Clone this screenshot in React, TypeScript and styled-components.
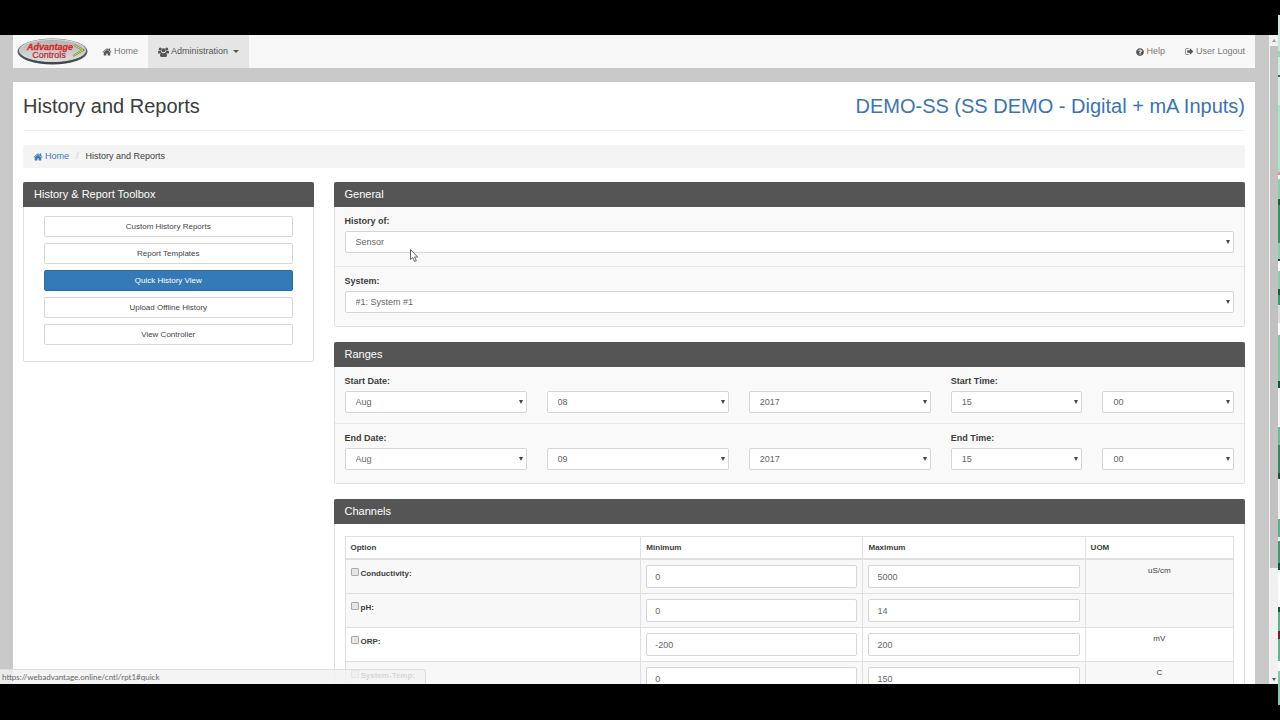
import React from "react";
import styled, { createGlobalStyle } from "styled-components";
import { FaQuestionCircle } from "react-icons/fa";

const Global = createGlobalStyle`
  *, *::before, *::after { box-sizing: border-box; }
  body { margin: 0; background: #000; }
  body, button, input, select { font-family: "Liberation Sans", Arial, sans-serif; }
`;

const Stage = styled.div`
  display: flex;
  height: 100vh;
  overflow: hidden;
  background: #000;
  color: #3c3c3c;
  font-size: 9px;
  line-height: 13px;
`;

const Screen = styled.div`
  flex: 1;
  min-width: 0;
  display: flex;
  margin: 35px 0 36px;
  position: relative;
  overflow: hidden;
`;

const EdgeStrip = styled.div`
  width: 2px;
  margin: 15px 0;
  background: linear-gradient(
    #c4e8da 0 36px, #8fdcb0 36px 42px, #c9efdd 42px 60px, #555 60px 62px, #d3efe3 62px 90px,
    #a6e8c6 90px 157px, #e888ac 157px 160px, #fff 160px 164px, #86d0a9 164px 184px,
    #1c5c44 184px 190px, #2f9468 190px 228px, #86d0a9 228px 244px, #333 244px 246px,
    #fff 246px 256px, #86d0a9 256px 274px, #115c3c 274px 280px, #35a070 280px 290px,
    #ddd 290px 308px, #fff 308px 320px, #7fc8a2 320px 366px, #12553a 366px 373px,
    #f4f4f4 373px 412px, #69bd94 412px 430px, #2f8c62 430px 458px, #12553a 458px 464px,
    #f0f0f0 464px 504px, #58b488 504px 522px, #fff 522px 526px, #3a9c70 526px 548px,
    #12553a 548px 555px, #fff 555px 592px, #12553a 592px 597px, #58b488 597px 616px,
    #7c1838 616px 624px, #5cb88c 624px 646px, #fff 646px 656px, #7ccba4 656px
  );
`;

const Page = styled.div`
  flex: 1;
  min-width: 0;
  padding: 0 14px 0 13px;
  background: #c9c9c9;
`;

const Nav = styled.nav`
  display: flex;
  align-items: stretch;
  height: 33px;
  padding-right: 10px;
  background: #f8f8f8;
`;

const Brand = styled.a`
  display: flex;
  align-items: center;
  padding: 0 4px;
`;

const NavLink = styled.a<{ $active?: boolean; $push?: boolean }>`
  display: flex;
  align-items: center;
  gap: 2px;
  padding: 0 10px;
  margin-left: ${(p) => (p.$push ? "auto" : "0")};
  color: ${(p) => (p.$active ? "#555" : "#777")};
  background: ${(p) => (p.$active ? "#e5e5e5" : "transparent")};
  text-decoration: none;
  &:last-child { padding-right: 0; }
  svg { color: #555; }
`;

const Caret = styled.span`
  margin-left: 3px;
  border: 3px solid transparent;
  border-top-color: #555;
  border-bottom-width: 0;
`;

const Content = styled.main`
  margin-top: 14px;
  padding: 12px 10px 20px;
  background: #fff;
`;

const TitleRow = styled.header`
  display: flex;
  justify-content: space-between;
  padding-bottom: 12px;
  border-bottom: 1px solid #f0f0f0;
  font-size: 20px;
  line-height: 24px;
`;

const Title = styled.h1`
  margin: 0;
  font-size: 20px;
  font-weight: 400;
`;

const Unit = styled.a`
  color: #3b74af;
  text-decoration: none;
`;

const Crumbs = styled.nav`
  display: flex;
  align-items: center;
  gap: 7px;
  height: 23px;
  margin: 14px 0;
  padding: 0 10px;
  border-radius: 2px;
  background: #f4f4f4;
`;

const CrumbLink = styled.a`
  display: flex;
  align-items: center;
  gap: 2px;
  color: #3c78b8;
  text-decoration: none;
`;

const Slash = styled.span`
  color: #ccc;
`;

const Columns = styled.div`
  display: flex;
  align-items: flex-start;
  margin: 0 -10px;
`;

const Column = styled.div<{ $share: number }>`
  width: ${(p) => p.$share}%;
  padding: 0 10px;
`;

const Panel = styled.section`
  margin-bottom: 15px;
  border: 1px solid #e0e0e0;
  border-radius: 2px;
`;

const PanelTitle = styled.h2`
  margin: -1px -1px 0;
  padding: 6px 11px;
  border-radius: 2px 2px 0 0;
  background: #555;
  color: #fff;
  font-size: 11px;
  font-weight: 400;
  line-height: 13px;
`;

const ToolList = styled.div`
  display: flex;
  flex-direction: column;
  gap: 6px;
  padding: 9px 20px 16px;
`;

const ToolButton = styled.button<{ $primary?: boolean }>`
  height: 21px;
  padding: 0;
  border: 1px solid ${(p) => (p.$primary ? "#2e6da4" : "#d8d8d8")};
  border-radius: 2px;
  background: ${(p) => (p.$primary ? "#337ab7" : "#fff")};
  color: ${(p) => (p.$primary ? "#fff" : "#444")};
  font-size: 8px;
`;

const FormRow = styled.div<{ $tight?: boolean }>`
  display: grid;
  grid-template-columns: 1fr;
  padding: 8px 10px ${(p) => (p.$tight ? 10 : 13)}px;
  background: #f9f9f9;
  & + & { border-top: 1px solid #e6e6e6; }
`;

const RangeRow = styled(FormRow)`
  grid-template-columns: 4fr 4fr 4fr 3fr 3fr;
  padding-left: 0;
  padding-right: 0;
`;

const Field = styled.div`
  display: flex;
  flex-direction: column;
  justify-content: flex-end;
  min-width: 0;
`;

const RangeField = styled(Field)`
  padding: 0 10px;
`;

const FieldLabel = styled.label`
  margin-bottom: 3px;
  font-weight: 700;
`;

const SelectBox = styled.span`
  display: grid;
  align-items: center;
  &::after {
    content: "";
    grid-area: 1 / 1;
    justify-self: end;
    margin-right: 4px;
    border: 2px solid transparent;
    border-top: 4px solid #444;
    border-bottom-width: 0;
    pointer-events: none;
  }
`;

const Select = styled.select`
  grid-area: 1 / 1;
  appearance: none;
  width: 100%;
  height: 22px;
  padding: 0 10px;
  border: 1px solid #d6d6d6;
  border-radius: 2px;
  background: #fff;
  color: #666;
  font-size: 9px;
`;

const TableWrap = styled.div`
  padding: 12px 10px 14px;
`;

const Table = styled.table`
  width: 100%;
  table-layout: fixed;
  border-collapse: collapse;
  font-size: 8px;
  line-height: 11px;
`;

const Th = styled.th<{ $width: string }>`
  width: ${(p) => p.$width};
  padding: 5px;
  border: 1px solid #e0e0e0;
  border-bottom-width: 2px;
  text-align: left;
`;

const Row = styled.tr<{ $shaded: boolean }>`
  background: ${(p) => (p.$shaded ? "#f8f8f8" : "#fff")};
`;

const Td = styled.td<{ $center?: boolean }>`
  padding: 5px;
  border: 1px solid #e0e0e0;
  text-align: ${(p) => (p.$center ? "center" : "left")};
  vertical-align: top;
`;

const Option = styled.label`
  display: flex;
  gap: 2px;
  font-weight: 700;
  span { padding-top: 3px; }
`;

const Check = styled.input`
  appearance: none;
  width: 8px;
  height: 8px;
  margin: 3px 0 0;
  border: 1px solid #aaa;
  border-radius: 1px;
  background: #e6e6e6;
`;

const NumberBox = styled.input`
  display: block;
  width: 100%;
  height: 23px;
  padding: 0 8px;
  border: 1px solid #d6d6d6;
  border-radius: 2px;
  background: #fff;
  color: #666;
  font-size: 9px;
`;

const ScrollTrack = styled.div`
  display: flex;
  flex-direction: column;
  align-items: center;
  justify-content: space-between;
  width: 9px;
  padding: 4px 0 3px;
  background: #f1f1f1;
`;

const ScrollThumb = styled.div`
  flex: 0 1 522px;
  align-self: stretch;
  margin: 4px 0 auto 1px;
  background: #c1c1c1;
`;

const ScrollArrow = styled.span<{ $up?: boolean }>`
  border: 2px solid transparent;
  ${(p) => (p.$up ? "border-bottom: 3px solid #999; border-top-width: 0;" : "border-top: 3px solid #555; border-bottom-width: 0;")}
`;

const StatusBar = styled.div`
  position: absolute;
  left: 0;
  bottom: 0;
  width: 426px;
  height: 15px;
  padding-left: 2px;
  border: 1px solid #ddd;
  border-width: 1px 1px 0 0;
  border-radius: 0 3px 0 0;
  background: rgba(242, 242, 242, 0.84);
  color: #666;
  font-family: Lato, "Open Sans", sans-serif;
  font-size: 8px;
  line-height: 15px;
`;

const Pointer = styled.svg`
  position: absolute;
  left: 409px;
  top: 213px;
`;

const HomeIcon = () => (
  <svg width="10" height="10" viewBox="0 0 1792 1792" fill="currentColor" aria-hidden="true">
    <path d="M1472 992v480q0 26-19 45t-45 19h-384v-384h-256v384h-384q-26 0-45-19t-19-45v-480q0-1 .5-3t.5-3l575-474 575 474q1 2 1 6zm223-69l-62 74q-8 9-21 11h-3q-13 0-21-7l-692-577-692 577q-12 8-24 7-13-2-21-11l-62-74q-8-10-7-23.5t11-21.5l719-599q32-26 76-26t76 26l244 204v-195q0-14 9-23t23-9h192q14 0 23 9t9 23v408l219 182q10 8 11 21.5t-7 23.5z" />
  </svg>
);

const UsersIcon = () => (
  <svg width="11" height="10" viewBox="0 0 22 20" fill="currentColor" aria-hidden="true">
    <circle cx="4.500" cy="4" r="3" />
    <circle cx="17.500" cy="4" r="3" />
    <circle cx="11" cy="6.500" r="4" />
    <path d="M0 12V9.500C0 8 1 7 2.500 7.500c1 .6 2 .6 3.200.2.200 1.700.8 2.800 1.800 3.800-1.500 0-2.500.5-3.200 1.500H1.500C.5 13 0 12.700 0 12zM22 12V9.500c0-1.500-1-2.500-2.500-2-1 .6-2 .6-3.200.2-.2 1.700-.8 2.800-1.800 3.800 1.500 0 2.500.5 3.200 1.500h2.800c1 0 1.500-.3 1.500-1z" />
    <path d="M4 17c0-3 1-5.500 3.500-5.500 1 .6 2 1 3.500 1s2.500-.4 3.500-1C17 11.500 18 14 18 17c0 1.800-1 2.800-2.700 2.800H6.700C5 19.800 4 18.800 4 17z" />
  </svg>
);

const LogoutIcon = () => (
  <svg width="9" height="9" viewBox="0 0 1664 1792" fill="currentColor" aria-hidden="true">
    <path d="M640 1440q0 4 1 20t.5 26.5-3 23.5-10 19.5-20.5 6.5h-320q-119 0-203.5-84.5t-84.5-203.5v-704q0-119 84.5-203.5t203.5-84.5h320q13 0 22.5 9.5t9.5 22.5q0 4 1 20t.5 26.5-3 23.5-10 19.5-20.5 6.5h-320q-66 0-113 47t-47 113v704q0 66 47 113t113 47h312l11.5 1 11.5 3 8 5.500 7 9 2 13.500zm928-544q0 26-19 45l-544 544q-19 19-45 19t-45-19-19-45v-288h-448q-26 0-45-19t-19-45v-384q0-26 19-45t45-19h448v-288q0-26 19-45t45-19 45 19l544 544q19 19 19 45z" />
  </svg>
);

const Logo = () => (
  <svg width="71" height="27" viewBox="0 0 71 27" role="img" aria-label="Advantage Controls">
    <defs>
      <linearGradient id="rim" x1="0" y1="0" x2="0" y2="1">
        <stop offset="0" stopColor="#777" />
        <stop offset="1" stopColor="#3f454b" />
      </linearGradient>
      <linearGradient id="face" x1="0" y1="0" x2="0" y2="1">
        <stop offset="0" stopColor="#b4b4b4" />
        <stop offset="1" stopColor="#dedede" />
      </linearGradient>
    </defs>
    <ellipse cx="35.500" cy="13.500" rx="35" ry="13" fill="url(#rim)" />
    <ellipse cx="35.500" cy="12.500" rx="33" ry="11" fill="url(#face)" stroke="#e0e0e0" />
    <path d="M57 7l9 5-10 6" fill="none" stroke="#5c7a3a" strokeWidth="2" />
    <path d="M57 7l9 5-10 6" fill="none" stroke="#e5e05a" />
    <g fontFamily="Liberation Sans, sans-serif" textAnchor="middle">
      <text x="33" y="12" fontSize="9" fontWeight="700" fontStyle="italic" fill="#d22a2a" stroke="#d22a2a" strokeWidth=".3">Advantage</text>
      <text x="32" y="20" fontSize="9" fill="#b8252b" stroke="#b8252b" strokeWidth=".2">Controls</text>
    </g>
  </svg>
);

const tools = ["Custom History Reports", "Report Templates", "Quick History View", "Upload Offline History", "View Controller"];

const ranges = [
  { name: "Start", day: "08" },
  { name: "End", day: "09" },
];

const channels = [
  { name: "Conductivity:", min: "0", max: "5000", uom: "uS/cm", shaded: true },
  { name: "pH:", min: "0", max: "14", uom: "", shaded: true },
  { name: "ORP:", min: "-200", max: "200", uom: "mV", shaded: false },
  { name: "System-Temp:", min: "0", max: "150", uom: "C", shaded: true },
];

const Dropdown = ({ id, value, label }: { id: string; value: string; label?: string }) => (
  <SelectBox>
    <Select id={id} aria-label={label} defaultValue={value}>
      <option>{value}</option>
    </Select>
  </SelectBox>
);

export default function App() {
  return (
    <Stage>
      <Global />
      <Screen>
        <Page>
          <Nav>
            <Brand href="#"><Logo /></Brand>
            <NavLink href="#"><HomeIcon />Home</NavLink>
            <NavLink href="#" $active><UsersIcon />Administration<Caret /></NavLink>
            <NavLink href="#" $push><FaQuestionCircle size={8} />Help</NavLink>
            <NavLink href="#"><LogoutIcon />User Logout</NavLink>
          </Nav>
          <Content>
            <TitleRow>
              <Title>History and Reports</Title>
              <Unit href="#">DEMO-SS (SS DEMO - Digital + mA Inputs)</Unit>
            </TitleRow>
            <Crumbs aria-label="Breadcrumb">
              <CrumbLink href="#"><HomeIcon />Home</CrumbLink>
              <Slash>/</Slash>
              <span>History and Reports</span>
            </Crumbs>
            <Columns>
              <Column $share={25}>
                <Panel>
                  <PanelTitle>History &amp; Report Toolbox</PanelTitle>
                  <ToolList>
                    {tools.map((t) => (
                      <ToolButton key={t} $primary={t === "Quick History View"}>{t}</ToolButton>
                    ))}
                  </ToolList>
                </Panel>
              </Column>
              <Column $share={75}>
                <Panel>
                  <PanelTitle>General</PanelTitle>
                  <FormRow>
                    <Field>
                      <FieldLabel htmlFor="history">History of:</FieldLabel>
                      <Dropdown id="history" value="Sensor" />
                    </Field>
                  </FormRow>
                  <FormRow>
                    <Field>
                      <FieldLabel htmlFor="system">System:</FieldLabel>
                      <Dropdown id="system" value="#1: System #1" />
                    </Field>
                  </FormRow>
                </Panel>
                <Panel>
                  <PanelTitle>Ranges</PanelTitle>
                  {ranges.map((r) => (
                    <RangeRow key={r.name} $tight={r.name === "Start"}>
                      <RangeField>
                        <FieldLabel htmlFor={`${r.name}-month`}>{r.name} Date:</FieldLabel>
                        <Dropdown id={`${r.name}-month`} value="Aug" />
                      </RangeField>
                      <RangeField><Dropdown id={`${r.name}-day`} label={`${r.name} day`} value={r.day} /></RangeField>
                      <RangeField><Dropdown id={`${r.name}-year`} label={`${r.name} year`} value="2017" /></RangeField>
                      <RangeField>
                        <FieldLabel htmlFor={`${r.name}-hour`}>{r.name} Time:</FieldLabel>
                        <Dropdown id={`${r.name}-hour`} value="15" />
                      </RangeField>
                      <RangeField><Dropdown id={`${r.name}-minute`} label={`${r.name} minute`} value="00" /></RangeField>
                    </RangeRow>
                  ))}
                </Panel>
                <Panel>
                  <PanelTitle>Channels</PanelTitle>
                  <TableWrap>
                    <Table>
                      <thead>
                        <tr>
                          <Th $width="33.3%">Option</Th>
                          <Th $width="25%">Minimum</Th>
                          <Th $width="25%">Maximum</Th>
                          <Th $width="16.7%">UOM</Th>
                        </tr>
                      </thead>
                      <tbody>
                        {channels.map((c) => (
                          <Row key={c.name} $shaded={c.shaded}>
                            <Td><Option><Check type="checkbox" /><span>{c.name}</span></Option></Td>
                            <Td><NumberBox aria-label={`${c.name} minimum`} defaultValue={c.min} /></Td>
                            <Td><NumberBox aria-label={`${c.name} maximum`} defaultValue={c.max} /></Td>
                            <Td $center>{c.uom}</Td>
                          </Row>
                        ))}
                      </tbody>
                    </Table>
                  </TableWrap>
                </Panel>
              </Column>
            </Columns>
          </Content>
        </Page>
        <ScrollTrack>
          <ScrollArrow $up />
          <ScrollThumb />
          <ScrollArrow />
        </ScrollTrack>
        <StatusBar>https://webadvantage.online/cntl/rpt1#quick</StatusBar>
        <Pointer width="10" height="15" viewBox="0 0 10 15" aria-hidden="true">
          <path d="M1.500 1.500v10l2.300-2 1.700 4 1.800-.8-1.700-3.700h3z" fill="#fff" stroke="#666" />
        </Pointer>
      </Screen>
      <EdgeStrip />
    </Stage>
  );
}
